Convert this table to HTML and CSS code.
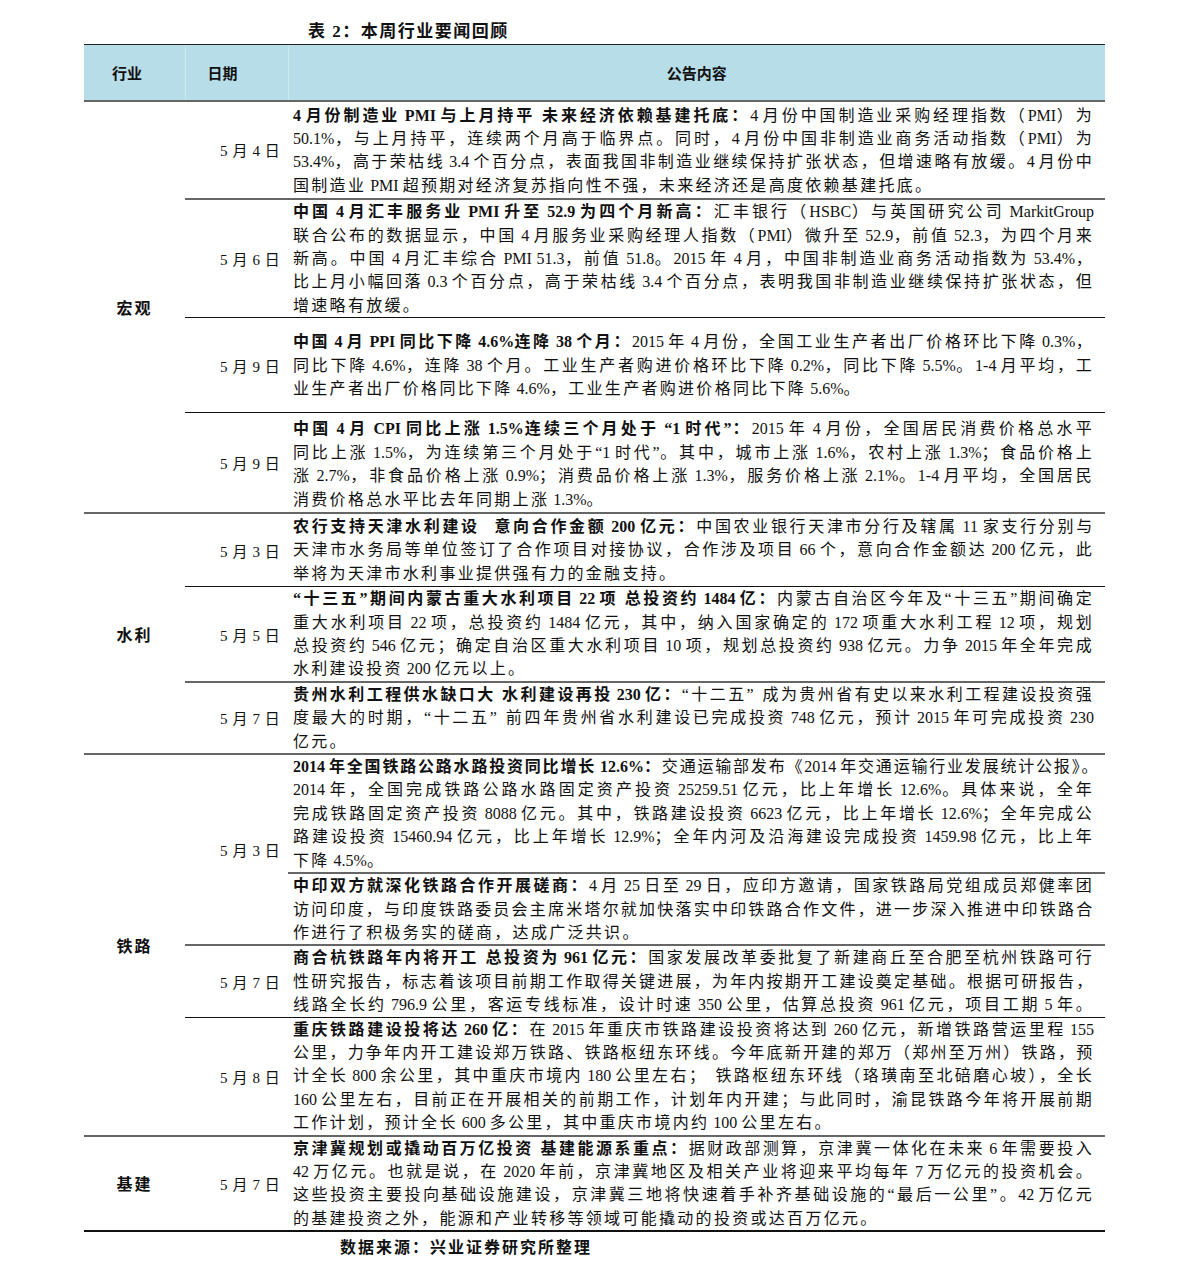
FILE: index.html
```html
<!DOCTYPE html>
<html lang="zh-CN">
<head>
<meta charset="utf-8">
<title>本周行业要闻回顾</title>
<link rel="stylesheet" href="styles.css">
</head>
<body>
<div class="page">
<h1 class="title">表 2：本周行业要闻回顾</h1>
<table class="news">
<colgroup><col class="c1"><col class="c2"><col class="c3"></colgroup>
<thead>
<tr><th class="h1">行业</th><th class="h2">日期</th><th class="h3">公告内容</th></tr>
</thead>
<tbody>
<tr>
<td class="cat" rowspan="4">宏观</td>
<td class="date">5 月 4 日</td>
<td class="txt p1">
<span class="ln"><b class="lead"><span class="n">4 </span>月份制造业<span class="n"> PMI </span>与上月持平 未来经济依赖基建托底：</b><span class="n">4 </span>月份中国制造业采购经理指数（<span class="n">PMI</span>）为</span>
<span class="ln"><span class="n">50.1%</span>，与上月持平，连续两个月高于临界点。同时，<span class="n">4 </span>月份中国非制造业商务活动指数（<span class="n">PMI</span>）为</span>
<span class="ln"><span class="n">53.4%</span>，高于荣枯线<span class="n"> 3.4 </span>个百分点，表面我国非制造业继续保持扩张状态，但增速略有放缓。<span class="n">4 </span>月份中</span>
<span class="ln end">国制造业<span class="n"> PMI </span>超预期对经济复苏指向性不强，未来经济还是高度依赖基建托底。</span>
</td>
</tr>
<tr>
<td class="date">5 月 6 日</td>
<td class="txt">
<span class="ln"><b class="lead">中国<span class="n"> 4 </span>月汇丰服务业<span class="n"> PMI </span>升至<span class="n"> 52.9 </span>为四个月新高：</b>汇丰银行（<span class="n">HSBC</span>）与英国研究公司<span class="n"> MarkitGroup</span></span>
<span class="ln">联合公布的数据显示，中国<span class="n"> 4 </span>月服务业采购经理人指数（<span class="n">PMI</span>）微升至<span class="n"> 52.9</span>，前值<span class="n"> 52.3</span>，为四个月来</span>
<span class="ln">新高。中国<span class="n"> 4 </span>月汇丰综合<span class="n"> PMI 51.3</span>，前值<span class="n"> 51.8</span>。<span class="n">2015 </span>年<span class="n"> 4 </span>月，中国非制造业商务活动指数为<span class="n"> 53.4%</span>，</span>
<span class="ln">比上月小幅回落<span class="n"> 0.3 </span>个百分点，高于荣枯线<span class="n"> 3.4 </span>个百分点，表明我国非制造业继续保持扩张状态，但</span>
<span class="ln end">增速略有放缓。</span>
</td>
</tr>
<tr class="thin">
<td class="date">5 月 9 日</td>
<td class="txt p3">
<span class="ln"><b class="lead">中国<span class="n"> 4 </span>月<span class="n"> PPI </span>同比下降<span class="n"> 4.6%</span>连降<span class="n"> 38 </span>个月：</b><span class="n">2015 </span>年<span class="n"> 4 </span>月份，全国工业生产者出厂价格环比下降<span class="n"> 0.3%</span>，</span>
<span class="ln">同比下降<span class="n"> 4.6%</span>，连降<span class="n"> 38 </span>个月。工业生产者购进价格环比下降<span class="n"> 0.2%</span>，同比下降<span class="n"> 5.5%</span>。<span class="n">1-4 </span>月平均，工</span>
<span class="ln end">业生产者出厂价格同比下降<span class="n"> 4.6%</span>，工业生产者购进价格同比下降<span class="n"> 5.6%</span>。</span>
</td>
</tr>
<tr class="thin">
<td class="date">5 月 9 日</td>
<td class="txt p4">
<span class="ln"><b class="lead">中国<span class="n"> 4 </span>月<span class="n"> CPI </span>同比上涨<span class="n"> 1.5%</span>连续三个月处于<span class="n"> “1 </span>时代<span class="n">”</span>：</b><span class="n">2015 </span>年<span class="n"> 4 </span>月份，全国居民消费价格总水平</span>
<span class="ln">同比上涨<span class="n"> 1.5%</span>，为连续第三个月处于<span class="n">“1 </span>时代<span class="n">”</span>。其中，城市上涨<span class="n"> 1.6%</span>，农村上涨<span class="n"> 1.3%</span>；食品价格上</span>
<span class="ln">涨<span class="n"> 2.7%</span>，非食品价格上涨<span class="n"> 0.9%</span>；消费品价格上涨<span class="n"> 1.3%</span>，服务价格上涨<span class="n"> 2.1%</span>。<span class="n">1-4 </span>月平均，全国居民</span>
<span class="ln end">消费价格总水平比去年同期上涨<span class="n"> 1.3%</span>。</span>
</td>
</tr>

<tr>
<td class="cat" rowspan="3">水利</td>
<td class="date">5 月 3 日</td>
<td class="txt p5">
<span class="ln tight"><b class="lead">农行支持天津水利建设<span class="n">&nbsp; &nbsp;</span>意向合作金额<span class="n"> 200 </span>亿元：</b>中国农业银行天津市分行及辖属<span class="n"> 11 </span>家支行分别与</span>
<span class="ln">天津市水务局等单位签订了合作项目对接协议，合作涉及项目<span class="n"> 66 </span>个，意向合作金额达<span class="n"> 200 </span>亿元，此</span>
<span class="ln end">举将为天津市水利事业提供强有力的金融支持。</span>
</td>
</tr>
<tr class="thin">
<td class="date">5 月 5 日</td>
<td class="txt">
<span class="ln"><b class="lead">“十三五”期间内蒙古重大水利项目<span class="n"> 22 </span>项 总投资约<span class="n"> 1484 </span>亿：</b>内蒙古自治区今年及“十三五”期间确定</span>
<span class="ln">重大水利项目<span class="n"> 22 </span>项，总投资约<span class="n"> 1484 </span>亿元，其中，纳入国家确定的<span class="n"> 172 </span>项重大水利工程<span class="n"> 12 </span>项，规划</span>
<span class="ln">总投资约<span class="n"> 546 </span>亿元；确定自治区重大水利项目<span class="n"> 10 </span>项，规划总投资约<span class="n"> 938 </span>亿元。力争<span class="n"> 2015 </span>年全年完成</span>
<span class="ln end">水利建设投资<span class="n"> 200 </span>亿元以上。</span>
</td>
</tr>
<tr>
<td class="date">5 月 7 日</td>
<td class="txt">
<span class="ln"><b class="lead">贵州水利工程供水缺口大 水利建设再投<span class="n"> 230 </span>亿：</b>“十二五” 成为贵州省有史以来水利工程建设投资强</span>
<span class="ln">度最大的时期，“十二五” 前四年贵州省水利建设已完成投资<span class="n"> 748 </span>亿元，预计<span class="n"> 2015 </span>年可完成投资<span class="n"> 230</span></span>
<span class="ln end">亿元。</span>
</td>
</tr>

<tr>
<td class="cat" rowspan="4">铁路</td>
<td class="date" rowspan="2">5 月 3 日</td>
<td class="txt">
<span class="ln tight"><b class="lead"><span class="n">2014 </span>年全国铁路公路水路投资同比增长<span class="n"> 12.6%</span>：</b>交通运输部发布《<span class="n">2014 </span>年交通运输行业发展统计公报》。</span>
<span class="ln"><span class="n">2014 </span>年，全国完成铁路公路水路固定资产投资<span class="n"> 25259.51 </span>亿元，比上年增长<span class="n"> 12.6%</span>。具体来说，全年</span>
<span class="ln">完成铁路固定资产投资<span class="n"> 8088 </span>亿元。其中，铁路建设投资<span class="n"> 6623 </span>亿元，比上年增长<span class="n"> 12.6%</span>；全年完成公</span>
<span class="ln">路建设投资<span class="n"> 15460.94 </span>亿元，比上年增长<span class="n"> 12.9%</span>；全年内河及沿海建设完成投资<span class="n"> 1459.98 </span>亿元，比上年</span>
<span class="ln end">下降<span class="n"> 4.5%</span>。</span>
</td>
</tr>
<tr>
<td class="txt">
<span class="ln"><b class="lead">中印双方就深化铁路合作开展磋商：</b><span class="n">4 </span>月<span class="n"> 25 </span>日至<span class="n"> 29 </span>日，应印方邀请，国家铁路局党组成员郑健率团</span>
<span class="ln tight">访问印度，与印度铁路委员会主席米塔尔就加快落实中印铁路合作文件，进一步深入推进中印铁路合</span>
<span class="ln end">作进行了积极务实的磋商，达成广泛共识。</span>
</td>
</tr>
<tr>
<td class="date">5 月 7 日</td>
<td class="txt">
<span class="ln"><b class="lead">商合杭铁路年内将开工 总投资为<span class="n"> 961 </span>亿元：</b>国家发展改革委批复了新建商丘至合肥至杭州铁路可行</span>
<span class="ln tight">性研究报告，标志着该项目前期工作取得关键进展，为年内按期开工建设奠定基础。根据可研报告，</span>
<span class="ln">线路全长约<span class="n"> 796.9 </span>公里，客运专线标准，设计时速<span class="n"> 350 </span>公里，估算总投资<span class="n"> 961 </span>亿元，项目工期<span class="n"> 5 </span>年。</span>
</td>
</tr>
<tr class="thin">
<td class="date">5 月 8 日</td>
<td class="txt">
<span class="ln"><b class="lead">重庆铁路建设投将达<span class="n"> 260 </span>亿：</b>在<span class="n"> 2015 </span>年重庆市铁路建设投资将达到<span class="n"> 260 </span>亿元，新增铁路营运里程<span class="n"> 155</span></span>
<span class="ln tight">公里，力争年内开工建设郑万铁路、铁路枢纽东环线。今年底新开建的郑万（郑州至万州）铁路，预</span>
<span class="ln">计全长<span class="n"> 800 </span>余公里，其中重庆市境内<span class="n"> 180 </span>公里左右；<span class="n">&nbsp; </span>铁路枢纽东环线（珞璜南至北碚磨心坡），全长</span>
<span class="ln"><span class="n">160 </span>公里左右，目前正在开展相关的前期工作，计划年内开建；与此同时，渝昆铁路今年将开展前期</span>
<span class="ln end">工作计划，预计全长<span class="n"> 600 </span>多公里，其中重庆市境内约<span class="n"> 100 </span>公里左右。</span>
</td>
</tr>

<tr class="last">
<td class="cat">基建</td>
<td class="date">5 月 7 日</td>
<td class="txt">
<span class="ln"><b class="lead">京津冀规划或撬动百万亿投资 基建能源系重点：</b>据财政部测算，京津冀一体化在未来<span class="n"> 6 </span>年需要投入</span>
<span class="ln"><span class="n">42 </span>万亿元。也就是说，在<span class="n"> 2020 </span>年前，京津冀地区及相关产业将迎来平均每年<span class="n"> 7 </span>万亿元的投资机会。</span>
<span class="ln">这些投资主要投向基础设施建设，京津冀三地将快速着手补齐基础设施的“最后一公里”。<span class="n">42 </span>万亿元</span>
<span class="ln end">的基建投资之外，能源和产业转移等领域可能撬动的投资或达百万亿元。</span>
</td>
</tr>
</tbody>
</table>
<p class="source">数据来源：兴业证券研究所整理</p>
</div>
</body>
</html>
```

FILE: styles.css
```css
* {
  box-sizing: border-box;
}

body {
  margin: 0;
  background: #ffffff;
  color: #111111;
  font-family: "Liberation Serif", "Noto Sans CJK SC", serif;
}

.page {
  width: 1191px;
}

.title {
  margin: 0;
  padding: 20px 0 0 308px;
  font-size: 17px;
  line-height: 24px;
  font-weight: 700;
  letter-spacing: 1.5px;
}

.news {
  margin-left: 84px;
  width: 1021px;
  border-collapse: collapse;
  table-layout: fixed;
}

.c1 { width: 101px; }
.c2 { width: 103px; }
.c3 { width: 817px; }

.news thead th {
  background: #b6dde8;
  height: 56px;
  padding: 0;
  font-size: 15px;
  font-weight: 700;
  border-top: 1px solid #222222;
  border-bottom: 2px solid #666666;
  vertical-align: middle;
}

.news thead th.h1 {
  text-align: left;
  padding-left: 28px;
}

.news thead th.h2 {
  text-align: left;
  padding-left: 22px;
  border-left: 1px solid #cfe8ef;
}

.news thead th.h3 {
  text-align: center;
  border-left: 1px solid #cfe8ef;
}

.news td {
  border-top: 2px solid #666666;
  padding: 0;
  vertical-align: middle;
}

.news tr.thin td {
  border-top: 1px solid #111111;
}

.news tr.last td {
  border-bottom: 2px solid #111111;
}

.news td.cat {
  text-align: center;
  font-size: 16px;
  font-weight: 700;
  letter-spacing: 2px;
}

.news td.date {
  font-size: 15px;
  letter-spacing: 0.6px;
  white-space: nowrap;
  padding-left: 35px;
}

.news td.txt {
  font-size: 16px;
  line-height: 23.4px;
  letter-spacing: 2.3px;
  padding: 0 11px 0 5px;
}

.news td.p1 {
  padding-top: 2px;
  padding-bottom: 1px;
}

.news td.p3 {
  padding-top: 12px;
  padding-bottom: 12px;
}

.news td.p4 {
  padding-top: 4px;
  padding-bottom: 1px;
}

.news td.p5 {
  padding-top: 1px;
  padding-bottom: 1px;
}

.ln {
  display: block;
  white-space: nowrap;
  text-align: justify;
  text-align-last: justify;
}

.ln.end {
  text-align-last: left;
}

.ln.tight {
  letter-spacing: 1.8px;
}

.n {
  letter-spacing: 0;
}

.lead {
  font-weight: 700;
}

.source {
  margin: 4px 0 0;
  padding-left: 340px;
  font-size: 16px;
  line-height: 24px;
  font-weight: 700;
  letter-spacing: 2px;
}
```
